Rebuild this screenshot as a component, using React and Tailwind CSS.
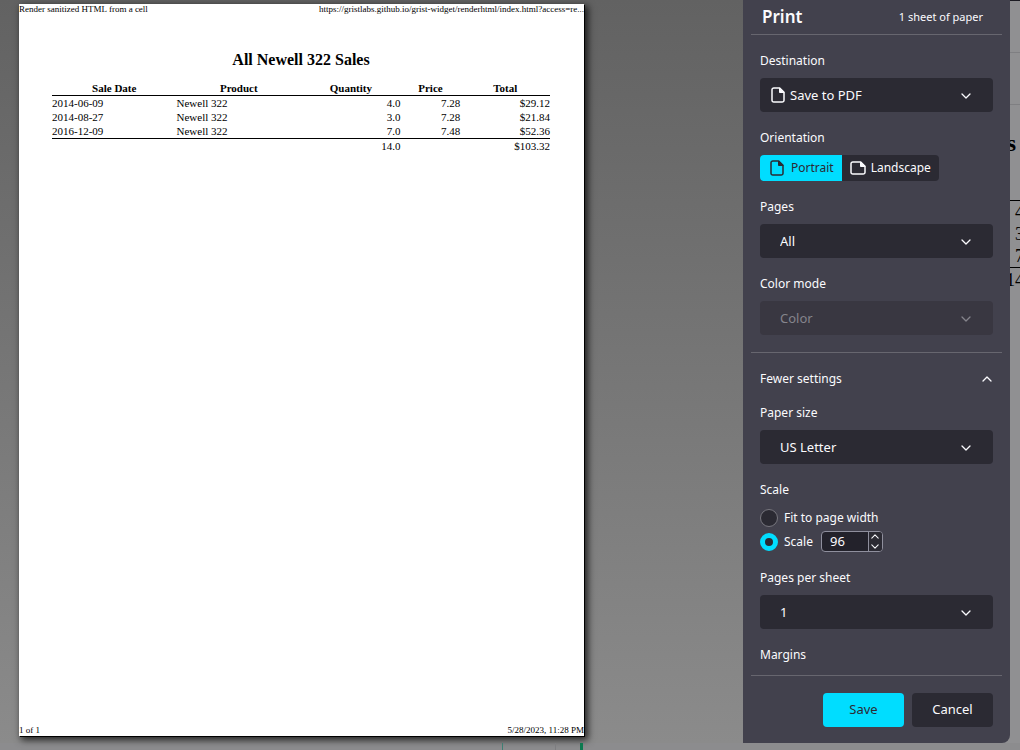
import { useState } from 'react';
import clsx from 'clsx';

const sales = [
    { date: '2014-06-09', product: 'Newell 322', quantity: '4.0', price: '7.28', total: '$29.12' },
    { date: '2014-08-27', product: 'Newell 322', quantity: '3.0', price: '7.28', total: '$21.84' },
    { date: '2016-12-09', product: 'Newell 322', quantity: '7.0', price: '7.48', total: '$52.36' },
];

const Chevron = ({ className, up }) => (
    <svg className={className} viewBox="0 0 10 6" fill="none" stroke="currentColor" strokeWidth="1.3" strokeLinecap="round" strokeLinejoin="round">
        <path d={up ? 'M1 5l4-4 4 4' : 'M1 1l4 4 4-4'} />
    </svg>
);

const PortraitIcon = ({ className }) => (
    <svg className={className} viewBox="0 0 14 16" fill="none" stroke="currentColor" strokeWidth="1.5" strokeLinejoin="round">
        <path d="M2.8 1h5.9L13 5.3v7.9A1.8 1.8 0 0 1 11.2 15H2.8A1.8 1.8 0 0 1 1 13.2V2.8A1.8 1.8 0 0 1 2.8 1z" />
        <path d="M8.5 1v4.5H13z" fill="currentColor" strokeWidth="1" />
    </svg>
);

const LandscapeIcon = ({ className }) => (
    <svg className={className} viewBox="0 0 16 14" fill="none" stroke="currentColor" strokeWidth="1.5" strokeLinejoin="round">
        <path d="M2.8 1h7.9L15 5.3v5.9a1.8 1.8 0 0 1-1.8 1.8H2.8A1.8 1.8 0 0 1 1 11.2V2.8A1.8 1.8 0 0 1 2.8 1z" />
        <path d="M10.5 1v4.5H15z" fill="currentColor" strokeWidth="1" />
    </svg>
);

const SelectField = ({ id, label, value, icon, disabled }) => (
    <div className="flex flex-col gap-[7px]">
        <label htmlFor={id} className="leading-5">{label}</label>
        <div className={clsx('relative', disabled && 'text-[#85848c]')}>
            {icon && <PortraitIcon className="absolute left-[11px] top-[9px] h-4 w-3.5" />}
            <select
                id={id}
                disabled={disabled}
                className={clsx(
                    'block h-[34px] w-full appearance-none rounded pr-10 pt-0.5 text-[13px]',
                    icon ? 'pl-[30px]' : 'pl-5',
                    disabled ? 'bg-[#393741]' : 'bg-[#2b2a33]'
                )}
            >
                <option>{value}</option>
            </select>
            <Chevron className="pointer-events-none absolute right-[22px] top-[15px] h-1.5 w-2.5" />
        </div>
    </div>
);

const PagePreview = () => (
    <section className="min-w-0 flex-1 bg-linear-to-b from-[#626262] to-[#8b8b8b] pl-[19px] pt-1">
        <article className="flex aspect-[565/732] w-[565px] flex-col bg-white text-black shadow-[1px_1px_0_#000,3px_3px_7px_1px_rgba(0,0,0,0.75)] font-['Liberation_Serif',serif]">
            <header className="flex justify-between text-[9px] leading-[11px]">
                <span>Render sanitized HTML from a cell</span>
                <span>https://gristlabs.github.io/grist-widget/renderhtml/index.html?access=re...</span>
            </header>
            <div className="flex-1 pl-[33px] pr-[34px] pt-9">
                <h1 className="text-center text-[16px] font-bold leading-[18px]">All Newell 322 Sales</h1>
                <table className="mt-3 w-full table-fixed border-collapse text-[11px] leading-[14px]">
                    <colgroup>
                        <col className="w-[25%]" />
                        <col className="w-[25%]" />
                        <col className="w-[20%]" />
                        <col className="w-[12%]" />
                        <col />
                    </colgroup>
                    <thead>
                        <tr className="border-b border-black">
                            <th>Sale Date</th>
                            <th>Product</th>
                            <th>Quantity</th>
                            <th>Price</th>
                            <th>Total</th>
                        </tr>
                    </thead>
                    <tbody>
                        {sales.map((sale) => (
                            <tr key={sale.date}>
                                <td>{sale.date}</td>
                                <td>{sale.product}</td>
                                <td className="text-right">{sale.quantity}</td>
                                <td className="text-right">{sale.price}</td>
                                <td className="text-right">{sale.total}</td>
                            </tr>
                        ))}
                    </tbody>
                    <tfoot>
                        <tr className="border-t border-black">
                            <td colSpan={2} />
                            <td className="text-right">14.0</td>
                            <td />
                            <td className="text-right">$103.32</td>
                        </tr>
                    </tfoot>
                </table>
            </div>
            <footer className="flex justify-between text-[9px] leading-[11px]">
                <span>1 of 1</span>
                <span>5/28/2023, 11:28 PM</span>
            </footer>
        </article>
    </section>
);

const PrintPanel = () => {
    const [orientation, setOrientation] = useState('portrait');
    const [scaleMode, setScaleMode] = useState('custom');
    const [scale, setScale] = useState(96);

    const radioClass = (checked) => clsx(
        'size-[18px] appearance-none rounded-full bg-[#2b2a33]',
        checked ? 'border-[5px] border-[#00ddff]' : 'border border-[#77767e]'
    );

    return (
        <form className="flex w-[267px] shrink-0 flex-col rounded-br-lg bg-[#42414d] text-[12px] text-[#fbfbfe] font-['Noto_Sans',sans-serif]">
            <header className="mx-2 flex h-[35px] shrink-0 items-center justify-between border-b border-[#67666f] pl-[11px] pr-[19px]">
                <h2 className="text-[17px] font-semibold">Print</h2>
                <p className="text-[11px]">1 sheet of paper</p>
            </header>

            <div className="min-h-0 flex-1 overflow-hidden">
                <div className="flex flex-col gap-4 px-[17px] pt-4">
                    <SelectField id="destination" label="Destination" value="Save to PDF" icon />

                    <fieldset>
                        <legend className="leading-5">Orientation</legend>
                        <div className="mt-[7px] flex h-[26px] w-fit overflow-hidden rounded bg-[#2b2a33]">
                            <label className={clsx('flex items-center gap-[7px] pl-2.5 pr-2', orientation === 'portrait' && 'bg-[#00ddff] text-[#2b2a33]')}>
                                <input type="radio" name="orientation" className="sr-only" checked={orientation === 'portrait'} onChange={() => setOrientation('portrait')} />
                                <PortraitIcon className="h-4 w-3.5" />
                                Portrait
                            </label>
                            <label className={clsx('flex items-center gap-[5px] px-2', orientation === 'landscape' && 'bg-[#00ddff] text-[#2b2a33]')}>
                                <input type="radio" name="orientation" className="sr-only" checked={orientation === 'landscape'} onChange={() => setOrientation('landscape')} />
                                <LandscapeIcon className="h-3.5 w-4" />
                                Landscape
                            </label>
                        </div>
                    </fieldset>

                    <SelectField id="pages" label="Pages" value="All" />
                    <SelectField id="color-mode" label="Color mode" value="Color" disabled />
                </div>

                <hr className="mx-2 mt-[17px] border-[#67666f]" />

                <div className="flex flex-col px-[17px] pt-4">
                    <button type="button" className="flex items-center justify-between pr-px leading-5">
                        Fewer settings
                        <Chevron className="h-1.5 w-2.5" up />
                    </button>

                    <div className="mt-3.5 flex flex-col gap-4">
                        <SelectField id="paper-size" label="Paper size" value="US Letter" />

                        <fieldset>
                            <legend className="leading-5">Scale</legend>
                            <div className="mt-2 flex h-5 items-center gap-1.5">
                                <input id="scale-fit" type="radio" name="scale" className={radioClass(scaleMode === 'fit')} checked={scaleMode === 'fit'} onChange={() => setScaleMode('fit')} />
                                <label htmlFor="scale-fit">Fit to page width</label>
                            </div>
                            <div className="mt-[3px] flex h-[21px] items-center gap-1.5">
                                <input id="scale-custom" type="radio" name="scale" className={radioClass(scaleMode === 'custom')} checked={scaleMode === 'custom'} onChange={() => setScaleMode('custom')} />
                                <label htmlFor="scale-custom">Scale</label>
                                <div className="ml-0.5 flex h-[21px] w-[62px] shrink-0 overflow-hidden rounded border border-[#8f8f9d] bg-[#23222b] text-[13px]">
                                    <input
                                        type="number"
                                        aria-label="Scale percentage"
                                        className="w-0 flex-1 pl-2 [appearance:textfield] [&::-webkit-inner-spin-button]:appearance-none"
                                        value={scale}
                                        onChange={(e) => setScale(Number(e.target.value))}
                                    />
                                    <div className="flex w-3.5 flex-col items-center justify-between border-l border-[#8f8f9d] bg-[#2b2a33] py-0.5">
                                        <button type="button" aria-label="Increase" onClick={() => setScale(scale + 1)}>
                                            <Chevron className="h-[5px] w-2" up />
                                        </button>
                                        <button type="button" aria-label="Decrease" onClick={() => setScale(scale - 1)}>
                                            <Chevron className="h-[5px] w-2" />
                                        </button>
                                    </div>
                                </div>
                            </div>
                        </fieldset>

                        <SelectField id="pages-per-sheet" label="Pages per sheet" value="1" />
                        <p className="leading-5">Margins</p>
                    </div>
                </div>
            </div>

            <footer className="mx-2 flex shrink-0 justify-end gap-2 border-t border-[#67666f] px-[9px] pb-4 pt-[17px] text-[13px]">
                <button type="submit" className="h-[34px] w-[81px] rounded bg-[#00ddff] text-[#2b2a33]">Save</button>
                <button type="button" className="h-[34px] w-[81px] rounded bg-[#2b2a33]">Cancel</button>
            </footer>
        </form>
    );
};

// 印刷ダイアログの後ろに見えている元のページ
const PageBehind = () => (
    <div className="w-2.5 shrink-0 overflow-hidden border-t border-[#1c1b22] bg-[#909092] text-black font-['Liberation_Serif',serif]">
        <div className="h-[52px] border-b border-[#7f7f82]" />
        <div className="h-[52px] border-b border-[#7f7f82]" />
        <div className="-ml-4 w-[30px] text-right">
            <p className="pr-2 pt-6 text-[24px] font-bold leading-7">s</p>
            <div className="mt-[43px] border-y border-black text-[18px] leading-[22px]">
                <p>4</p>
                <p>3</p>
                <p>7</p>
            </div>
            <p className="text-[18px] leading-6">14</p>
        </div>
    </div>
);

const App = () => (
    <main className="flex h-screen flex-col overflow-hidden bg-[#8c8c8e]">
        <div className="flex min-h-0 flex-1 bg-[#909092]">
            <PagePreview />
            <PrintPanel />
            <PageBehind />
        </div>
        <div className="flex h-[7px] shrink-0 pl-[502px]">
            <div className="w-[54px] border-x border-l-[#3f7f73] border-r-[#7d7d80]" />
            <div className="ml-6 w-[3px] bg-[#0d7a50]" />
        </div>
    </main>
);

export default App;
